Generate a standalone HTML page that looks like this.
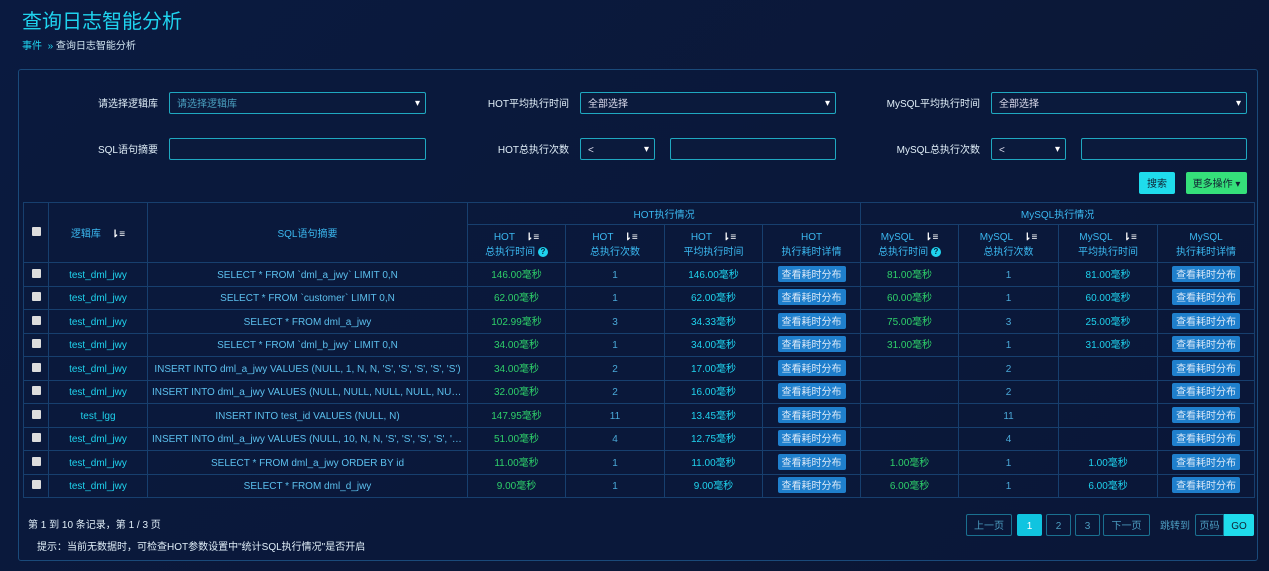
<!DOCTYPE html>
<html><head><meta charset="utf-8"><style>
*{margin:0;padding:0;box-sizing:border-box}
body{width:1269px;height:571px;overflow:hidden;background:linear-gradient(135deg,#0a1a40,#0b1838 60%,#0a1533);font-family:"Liberation Sans","Noto Sans CJK SC",sans-serif;color:#cfe6f5;position:relative;font-size:10px;line-height:12px}
.abs{position:absolute}
h1{position:absolute;left:22px;top:9px;font-size:20px;line-height:26px;font-weight:normal;color:#1fd3ee}
.bc{left:22px;top:41px;font-size:10px;color:#d0e4f0}
.bc b{color:#1fd3ee;font-weight:normal}
.panel{left:18px;top:69px;width:1240px;height:492px;border:1px solid #1a4a7a;border-radius:3px;background:rgba(10,25,60,.6)}
.lbl{font-size:10px;color:#e0eef8;text-align:right;width:120px;line-height:12px}
.inp{border:1px solid #1fa8c0;border-radius:2px;height:22px;background:#0b1a3c;color:#4aa0c0;font-size:10px;padding:0 7px;line-height:24px}
.inp.s:after{content:"▾";position:absolute;right:5px;top:0;color:#fff;font-size:10px;line-height:22px}
.btn{border-radius:2px;font-size:10px;text-align:center;line-height:25px;height:22px;color:#123}
table{position:absolute;left:23px;top:202px;width:1231px;border-collapse:collapse;table-layout:fixed}
td,th{border:1px solid #173f6e;text-align:center;font-size:10px;font-weight:normal;white-space:nowrap;overflow:hidden;text-overflow:ellipsis;vertical-align:middle;padding:3px 4px 0}
th{color:#3bb8f0;line-height:15px}
td{height:23.5px;line-height:12px;color:#5cc0ee}
td.db{color:#1fd3ee}
td.g{color:#2ed06a}
td.c{color:#1fd3ee}
td.n{color:#4aa8d8}
.cb{display:inline-block;width:9px;height:9px;background:#ddd;border-radius:1px;vertical-align:middle;position:relative;top:-2px}
.vb{display:inline-block;background:#1f7fcc;color:#dbe9f8;border-radius:2px;padding:2px 4px 0;height:16px;line-height:16px;font-size:10px;vertical-align:middle;position:relative;top:-2px}
.si{color:#fff;font-size:10px;margin-left:10px;font-weight:bold}
.q{display:inline-block;width:10px;height:10px;border-radius:50%;background:#1fd3ee;color:#07203a;font-size:8px;line-height:10px;font-weight:bold;vertical-align:middle}
.pg{border:1px solid #1a7090;border-radius:2px;height:22px;line-height:23px;text-align:center;color:#4c9cc0;font-size:10px;top:514px}
</style></head><body>
<h1>查询日志智能分析</h1>
<div class="abs bc"><b>事件</b> &nbsp;<b>»</b> 查询日志智能分析</div>
<div class="abs panel"></div>

<div class="abs lbl" style="left:38px;top:99px">请选择逻辑库</div>
<div class="abs inp s" style="left:169px;top:92px;width:257px">请选择逻辑库</div>
<div class="abs lbl" style="left:449px;top:99px">HOT平均执行时间</div>
<div class="abs inp s" style="left:580px;top:92px;width:256px;color:#dde">全部选择</div>
<div class="abs lbl" style="left:860px;top:99px">MySQL平均执行时间</div>
<div class="abs inp s" style="left:991px;top:92px;width:256px;color:#dde">全部选择</div>

<div class="abs lbl" style="left:38px;top:145px">SQL语句摘要</div>
<div class="abs inp" style="left:169px;top:138px;width:257px"></div>
<div class="abs lbl" style="left:449px;top:145px">HOT总执行次数</div>
<div class="abs inp s" style="left:580px;top:138px;width:75px;color:#dde">&lt;</div>
<div class="abs inp" style="left:670px;top:138px;width:166px"></div>
<div class="abs lbl" style="left:860px;top:145px">MySQL总执行次数</div>
<div class="abs inp s" style="left:991px;top:138px;width:75px;color:#dde">&lt;</div>
<div class="abs inp" style="left:1081px;top:138px;width:166px"></div>

<div class="abs btn" style="left:1139px;top:172px;width:36px;background:#1fdcec">搜索</div>
<div class="abs btn" style="left:1186px;top:172px;width:61px;background:#35e07a">更多操作 ▾</div>

<table>
<colgroup><col style="width:25px"><col style="width:99px"><col style="width:320px"><col style="width:98px"><col style="width:99px"><col style="width:98px"><col style="width:98px"><col style="width:98px"><col style="width:100px"><col style="width:99px"><col style="width:97px"></colgroup>
<tr style="height:22px"><th rowspan="2"><span class="cb"></span></th><th rowspan="2">逻辑库<span class="si">⇂≡</span></th><th rowspan="2">SQL语句摘要</th><th colspan="4">HOT执行情况</th><th colspan="4">MySQL执行情况</th></tr>
<tr style="height:38px"><th>HOT<span class="si">⇂≡</span><br>总执行时间 <span class="q">?</span></th><th>HOT<span class="si">⇂≡</span><br>总执行次数</th><th>HOT<span class="si">⇂≡</span><br>平均执行时间</th><th>HOT<br>执行耗时详情</th><th>MySQL<span class="si">⇂≡</span><br>总执行时间 <span class="q">?</span></th><th>MySQL<span class="si">⇂≡</span><br>总执行次数</th><th>MySQL<span class="si">⇂≡</span><br>平均执行时间</th><th>MySQL<br>执行耗时详情</th></tr>
<tr><td><span class="cb"></span></td><td class="db">test_dml_jwy</td><td>SELECT * FROM `dml_a_jwy` LIMIT 0,N</td><td class="g">146.00毫秒</td><td class="n">1</td><td class="c">146.00毫秒</td><td><span class="vb">查看耗时分布</span></td><td class="g">81.00毫秒</td><td class="n">1</td><td class="c">81.00毫秒</td><td><span class="vb">查看耗时分布</span></td></tr>
<tr><td><span class="cb"></span></td><td class="db">test_dml_jwy</td><td>SELECT * FROM `customer` LIMIT 0,N</td><td class="g">62.00毫秒</td><td class="n">1</td><td class="c">62.00毫秒</td><td><span class="vb">查看耗时分布</span></td><td class="g">60.00毫秒</td><td class="n">1</td><td class="c">60.00毫秒</td><td><span class="vb">查看耗时分布</span></td></tr>
<tr><td><span class="cb"></span></td><td class="db">test_dml_jwy</td><td>SELECT * FROM dml_a_jwy</td><td class="g">102.99毫秒</td><td class="n">3</td><td class="c">34.33毫秒</td><td><span class="vb">查看耗时分布</span></td><td class="g">75.00毫秒</td><td class="n">3</td><td class="c">25.00毫秒</td><td><span class="vb">查看耗时分布</span></td></tr>
<tr><td><span class="cb"></span></td><td class="db">test_dml_jwy</td><td>SELECT * FROM `dml_b_jwy` LIMIT 0,N</td><td class="g">34.00毫秒</td><td class="n">1</td><td class="c">34.00毫秒</td><td><span class="vb">查看耗时分布</span></td><td class="g">31.00毫秒</td><td class="n">1</td><td class="c">31.00毫秒</td><td><span class="vb">查看耗时分布</span></td></tr>
<tr><td><span class="cb"></span></td><td class="db">test_dml_jwy</td><td>INSERT INTO dml_a_jwy VALUES (NULL, 1, N, N, 'S', 'S', 'S', 'S', 'S')</td><td class="g">34.00毫秒</td><td class="n">2</td><td class="c">17.00毫秒</td><td><span class="vb">查看耗时分布</span></td><td></td><td class="n">2</td><td></td><td><span class="vb">查看耗时分布</span></td></tr>
<tr><td><span class="cb"></span></td><td class="db">test_dml_jwy</td><td>INSERT INTO dml_a_jwy VALUES (NULL, NULL, NULL, NULL, NULL)</td><td class="g">32.00毫秒</td><td class="n">2</td><td class="c">16.00毫秒</td><td><span class="vb">查看耗时分布</span></td><td></td><td class="n">2</td><td></td><td><span class="vb">查看耗时分布</span></td></tr>
<tr><td><span class="cb"></span></td><td class="db">test_lgg</td><td>INSERT INTO test_id VALUES (NULL, N)</td><td class="g">147.95毫秒</td><td class="n">11</td><td class="c">13.45毫秒</td><td><span class="vb">查看耗时分布</span></td><td></td><td class="n">11</td><td></td><td><span class="vb">查看耗时分布</span></td></tr>
<tr><td><span class="cb"></span></td><td class="db">test_dml_jwy</td><td>INSERT INTO dml_a_jwy VALUES (NULL, 10, N, N, 'S', 'S', 'S', 'S', 'S')</td><td class="g">51.00毫秒</td><td class="n">4</td><td class="c">12.75毫秒</td><td><span class="vb">查看耗时分布</span></td><td></td><td class="n">4</td><td></td><td><span class="vb">查看耗时分布</span></td></tr>
<tr><td><span class="cb"></span></td><td class="db">test_dml_jwy</td><td>SELECT * FROM dml_a_jwy ORDER BY id</td><td class="g">11.00毫秒</td><td class="n">1</td><td class="c">11.00毫秒</td><td><span class="vb">查看耗时分布</span></td><td class="g">1.00毫秒</td><td class="n">1</td><td class="c">1.00毫秒</td><td><span class="vb">查看耗时分布</span></td></tr>
<tr><td><span class="cb"></span></td><td class="db">test_dml_jwy</td><td>SELECT * FROM dml_d_jwy</td><td class="g">9.00毫秒</td><td class="n">1</td><td class="c">9.00毫秒</td><td><span class="vb">查看耗时分布</span></td><td class="g">6.00毫秒</td><td class="n">1</td><td class="c">6.00毫秒</td><td><span class="vb">查看耗时分布</span></td></tr>
</table>

<div class="abs" style="left:28px;top:520px;color:#e0eef8">第 1 到 10 条记录，第 1 / 3 页</div>
<div class="abs" style="left:37px;top:542px;color:#e0eef8">提示：当前无数据时，可检查HOT参数设置中"统计SQL执行情况"是否开启</div>

<div class="abs pg" style="left:966px;width:46px">上一页</div>
<div class="abs pg" style="left:1017px;width:25px;background:#10c4e0;border-color:#10c4e0;color:#fff">1</div>
<div class="abs pg" style="left:1046px;width:25px">2</div>
<div class="abs pg" style="left:1075px;width:25px">3</div>
<div class="abs pg" style="left:1103px;width:47px">下一页</div>
<div class="abs" style="left:1160px;top:521px;color:#4c9cc0">跳转到</div>
<div class="abs pg" style="left:1195px;width:29px;border-radius:2px 0 0 2px">页码</div>
<div class="abs pg" style="left:1224px;width:30px;background:#1fdcec;border-color:#1fdcec;color:#123;border-radius:0 2px 2px 0">GO</div>
</body></html>
